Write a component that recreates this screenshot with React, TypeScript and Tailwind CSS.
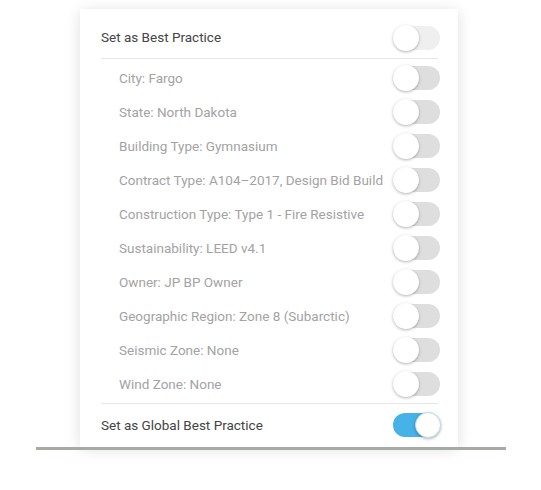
import React, { useState } from "react";

const items = [
  "City: Fargo",
  "State: North Dakota",
  "Building Type: Gymnasium",
  "Contract Type: A104\u20132017, Design Bid Build",
  "Construction Type: Type 1 - Fire Resistive",
  "Sustainability: LEED v4.1",
  "Owner: JP BP Owner",
  "Geographic Region: Zone 8 (Subarctic)",
  "Seismic Zone: None",
  "Wind Zone: None",
];

const Toggle = ({ on, light, onClick }: { on: boolean; light?: boolean; onClick: () => void }) => (
  <button
    onClick={onClick}
    className={`relative w-[47px] h-[24px] rounded-full shrink-0 ${on ? "bg-[#47b2e8]" : light ? "bg-[#efefef]" : "bg-[#dedede]"}`}
  >
    <span
      className={`absolute top-[-1px] w-[26px] h-[26px] rounded-full bg-white shadow-[0_1px_3px_rgba(0,0,0,0.3)] ${on ? "right-[-1px] border border-[#b9dcec]" : "left-0"}`}
    />
  </button>
);

export default function App() {
  const [best, setBest] = useState(false);
  const [global, setGlobal] = useState(true);
  const [flags, setFlags] = useState<boolean[]>(items.map(() => false));

  return (
    <div className="w-[541px] h-[490px] bg-white font-['Roboto',sans-serif] text-[13.5px]">
      <div className="pt-[9px]">
        <div className="ml-[80px] w-[378px] h-[438px] bg-white shadow-[0_2px_14px_rgba(0,0,0,0.13)] pt-[8px] pl-[21px] pr-[18px]">
          <div className="flex items-center justify-between h-[41px]">
            <span className="text-[#444444]">Set as Best Practice</span>
            <Toggle on={best} light onClick={() => setBest(!best)} />
          </div>
          <div className="h-px bg-[#e6e6e6] mr-[2px]" />
          <div className="py-[2px]">
            {items.map((label, i) => (
              <div key={label} className="flex items-center justify-between h-[34px] pl-[18px]">
                <span className="text-[#a3a3a3]">{label}</span>
                <Toggle
                  on={flags[i]}
                  onClick={() => setFlags(flags.map((f, j) => (j === i ? !f : f)))}
                />
              </div>
            ))}
          </div>
          <div className="h-px bg-[#e6e6e6] mr-[2px]" />
          <div className="flex items-center justify-between h-[42px]">
            <span className="text-[#444444]">Set as Global Best Practice</span>
            <Toggle on={global} onClick={() => setGlobal(!global)} />
          </div>
        </div>
        <div className="relative ml-[36px] w-[470px] h-[3px] bg-[#a5aaa5]" />
      </div>
    </div>
  );
}
